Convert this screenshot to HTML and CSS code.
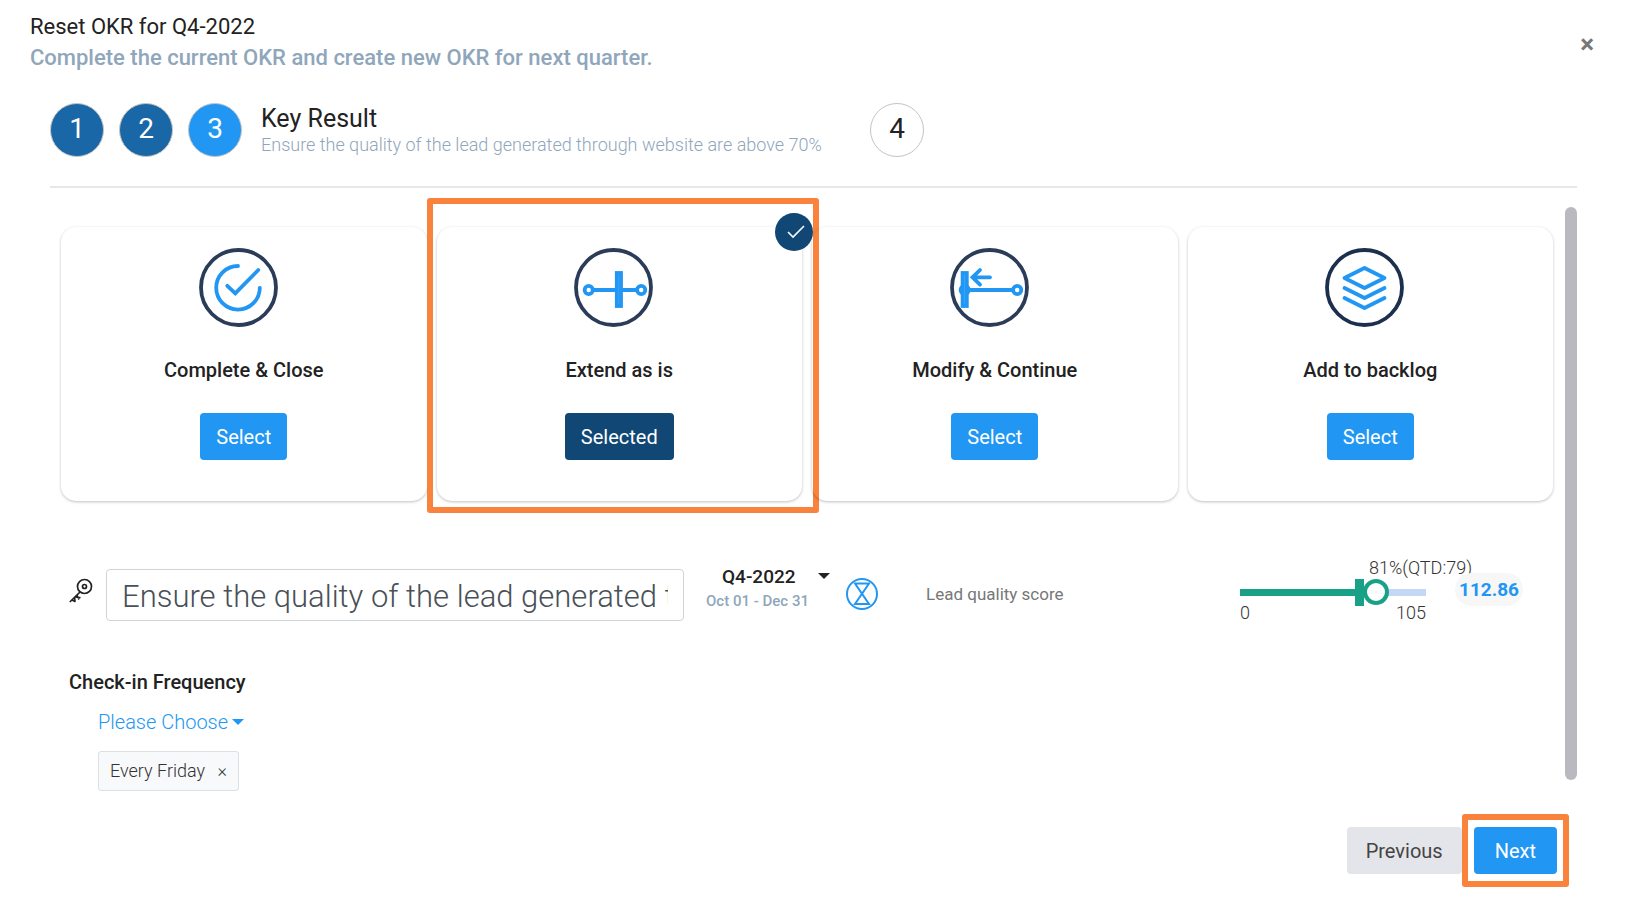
FILE: index.html
```html
<!DOCTYPE html>
<html lang="en">
  <head>
    <meta charset="UTF-8" />
    <meta name="viewport" content="width=device-width, initial-scale=1.0" />
    <title>Reset OKR</title>
    <link rel="stylesheet" href="styles.css">
  </head>
  <body>
    <div class="modal">
      <header class="modal-header">
        <div>
          <h1>Reset OKR for Q4-2022</h1>
          <p class="subtitle">Complete the current OKR and create new OKR for next quarter.</p>
        </div>
        <button class="close" type="button" aria-label="Close">&times;</button>
      </header>

      <div class="steps">
        <span class="step done">1</span>
        <span class="step done">2</span>
        <span class="step active">3</span>
        <div class="step-info">
          <h2>Key Result</h2>
          <p>Ensure the quality of the lead generated through website are above 70%</p>
        </div>
        <span class="step">4</span>
      </div>

      <div class="modal-body">
        <div class="content">
          <div class="cards">
            <section class="card">
              <svg class="card-icon" viewBox="0 0 90 79" fill="none" stroke="#2196f3" stroke-width="3.8" stroke-linecap="round">
                <circle cx="39.5" cy="39.5" r="37.5" stroke="#2b3c59" />
                <path d="M39 18a21.8 21.8 0 1 0 21.8 21.8M28.3 37.8l8 7.6 23-23.4" />
              </svg>
              <h3>Complete &amp; Close</h3>
              <button class="btn btn-primary" type="button">Select</button>
            </section>

            <section class="card selected">
              <span class="badge">
                <svg viewBox="0 0 18 14" fill="none" stroke="#fff" stroke-width="1.6"><path d="M1 7l5 5L17 1" /></svg>
              </span>
              <svg class="card-icon" viewBox="0 0 90 79" fill="none" stroke="#2196f3" stroke-width="3.8">
                <circle cx="39.5" cy="39.5" r="37.5" stroke="#2b3c59" />
                <circle cx="14.7" cy="42" r="4.1" />
                <circle cx="67.2" cy="42" r="4.1" />
                <path d="M19 42h44" />
                <rect x="42.8" y="25" width="4.2" height="33" fill="#64b5f6" />
              </svg>
              <h3>Extend as is</h3>
              <button class="btn btn-dark" type="button">Selected</button>
            </section>

            <section class="card">
              <svg class="card-icon" viewBox="0 0 90 79" fill="none" stroke="#2196f3" stroke-width="3.8">
                <circle cx="39.5" cy="39.5" r="37.5" stroke="#2b3c59" />
                <circle cx="14.7" cy="42" r="4.1" />
                <circle cx="67.2" cy="42" r="4.1" />
                <path d="M19 42h44" />
                <rect x="12.6" y="25" width="4.2" height="33" fill="#64b5f6" />
                <path d="M40 29.3H23M30 22l-7.5 7.3 7.5 7.3" stroke-linecap="round" />
              </svg>
              <h3>Modify &amp; Continue</h3>
              <button class="btn btn-primary" type="button">Select</button>
            </section>

            <section class="card">
              <svg class="card-icon" viewBox="0 0 90 79" fill="none" stroke="#2196f3" stroke-width="3.8" stroke-linecap="round" stroke-linejoin="round">
                <circle cx="39.5" cy="39.5" r="37.5" stroke="#1c2f4d" />
                <path d="M19.5 30l20-10 20 10-20 10zM19.5 40l20 10 20-10M19.5 50l20 10 20-10" />
              </svg>
              <h3>Add to backlog</h3>
              <button class="btn btn-primary" type="button">Select</button>
            </section>
          </div>

          <div class="key-result">
            <svg class="key-icon" viewBox="0 0 24 26" fill="none" stroke="#222" stroke-width="1.7">
              <circle cx="15.5" cy="8.5" r="7" />
              <circle cx="15.5" cy="8.5" r="2" />
              <path d="M11 14L.8 24M5.5 19.8l.6 4M3 22l3.5 1.8M8 17.5l2 4M6.5 19l5 .6" />
            </svg>
            <input class="kr-title" type="text" aria-label="Key result" value="Ensure the quality of the lead generated through website are above 70%" />
            <div class="period">
              <button class="period-toggle" type="button">Q4-2022<span class="caret"></span></button>
              <span class="period-dates">Oct 01 - Dec 31</span>
            </div>
            <svg class="hourglass" viewBox="0 0 32 32" fill="none" stroke="#2196f3" stroke-width="2">
              <circle cx="16" cy="16" r="15" />
              <path d="M9 5.5h14L9 26h14z" />
            </svg>
            <span class="metric">Lead quality score</span>
            <div class="progress">
              <label class="progress-label" for="score">81%(QTD:79)</label>
              <div class="slider">
                <input type="range" id="score" min="0" max="105" value="81" />
                <span class="qtd-marker"></span>
              </div>
              <div class="limits"><span>0</span><span>105</span></div>
            </div>
            <span class="score">112.86</span>
          </div>

          <div class="frequency">
            <h3>Check-in Frequency</h3>
            <button class="choose" type="button">Please Choose<span class="caret"></span></button>
            <div class="tag">Every Friday <button type="button" aria-label="Remove Every Friday">&times;</button></div>
          </div>
        </div>
        <div class="scrollbar"></div>
      </div>

      <footer class="modal-footer">
        <button class="btn btn-light" type="button">Previous</button>
        <div class="highlight">
          <button class="btn btn-primary btn-next" type="button">Next</button>
        </div>
      </footer>
    </div>
  </body>
</html>
```

FILE: styles.css
```css
* {
  box-sizing: border-box;
}
body {
  margin: 0;
  background-color: #fff;
  color: #222;
  font-family: Roboto, sans-serif;
  font-size: 18px;
  line-height: 24px;
}
h1, h2, h3, p {
  margin: 0;
}
button, input {
  font-family: inherit;
}
button {
  border: none;
  padding: 0;
  background: none;
  cursor: pointer;
}

/* header */
.modal-header {
  display: flex;
  justify-content: space-between;
  padding: 11px 35px 0 30px;
}
h1 {
  font-size: 22px;
  font-weight: 400;
  line-height: 31px;
}
.subtitle {
  color: #8fa6bb;
  font-size: 22px;
  font-weight: 500;
  line-height: 31px;
}
.close {
  align-self: center;
  padding-top: 4px;
  color: #777;
  font-size: 26px;
  font-weight: 700;
}

/* steps */
.steps {
  display: flex;
  align-items: center;
  height: 84px;
  margin: 31px 52px 0 50px;
  padding-bottom: 30px;
  border-bottom: 2px solid #e6e7e8;
}
.step {
  width: 54px;
  height: 54px;
  margin-right: 15px;
  border: 1px solid #c4c4c4;
  border-radius: 50%;
  font-size: 28px;
  line-height: 50px;
  text-align: center;
}
.done {
  background-color: #1967a6;
  color: #fff;
}
.active {
  background-color: #2196f3;
  color: #fff;
}
.step-info {
  min-width: 574px;
  margin: 2px 35px 0 4px;
}
.step-info h2 {
  font-size: 25px;
  font-weight: 400;
  line-height: 28px;
}
.step-info p {
  color: #8fa6bb;
  font-weight: 300;
}

/* body */
.modal-body {
  display: flex;
  gap: 12px;
  margin: 19px 52px 0 61px;
}
.content {
  flex: 1;
  min-width: 0;
  padding-top: 20px;
}
.scrollbar {
  width: 12px;
  margin-bottom: 11px;
  border-radius: 6px;
  background-color: #bab9bf;
}
.cards {
  display: grid;
  grid-template-columns: repeat(4, 1fr);
  gap: 10px;
}
.card {
  position: relative;
  display: flex;
  flex-direction: column;
  align-items: center;
  height: 274px;
  padding-top: 21px;
  border-radius: 15px;
  box-shadow: 0 1px 3px rgba(0, 0, 0, 0.25);
}
.card-icon {
  width: 90px;
  height: 79px;
}
.card h3 {
  margin: 30px 0;
  font-size: 20px;
  font-weight: 500;
  line-height: 26px;
}
.btn {
  height: 47px;
  padding: 0 16px;
  border-radius: 4px;
  color: #fff;
  font-size: 20px;
}
.btn-primary {
  background-color: #2196f3;
}
.btn-dark {
  background-color: #104775;
}
.btn-light {
  padding: 0 19px;
  background-color: #e4e5ea;
  color: #444;
}
.badge {
  position: absolute;
  top: -14px;
  right: -11px;
  display: flex;
  align-items: center;
  justify-content: center;
  width: 38px;
  height: 38px;
  border-radius: 50%;
  background-color: #104775;
}
.badge svg {
  width: 18px;
  margin-left: 4px;
}
.selected::after {
  content: "";
  position: absolute;
  inset: -29px -17px -12px -10px;
  border: 6px solid #f9823d;
  border-radius: 3px;
}

/* key result row */
.key-result {
  display: flex;
  align-items: center;
  margin-top: 48px;
  padding: 0 30px 0 8px;
}
.key-icon {
  width: 24px;
  height: 26px;
  margin: 4px 13px 0 0;
}
.kr-title {
  width: 578px;
  height: 52px;
  margin-top: 20px;
  margin-bottom: 8px;
  padding: 2px 15px 0;
  border: 1px solid #ced4da;
  border-radius: 4px;
  color: #495057;
  font-size: 31px;
  font-weight: 300;
}
.period {
  width: 140px;
  margin-left: 22px;
}
.period-toggle {
  margin-left: 16px;
  color: #222;
  font-size: 19px;
  font-weight: 500;
}
.caret {
  display: inline-block;
  margin-left: 4px;
  border: 6px solid transparent;
  border-top-color: currentColor;
  border-bottom: none;
  vertical-align: 4px;
}
.period-toggle .caret {
  margin-left: 22px;
}
.period-dates {
  display: block;
  color: #8fa6bb;
  font-size: 15px;
  font-weight: 500;
}
.hourglass {
  width: 32px;
  height: 32px;
  margin-top: 10px;
}
.metric {
  margin: 10px 0 0 48px;
  color: #777;
  font-size: 17px;
}
.progress {
  width: 186px;
  margin-left: auto;
  color: #333;
}
.progress-label {
  display: block;
  margin-left: 129px;
  font-weight: 300;
  line-height: 22px;
  white-space: nowrap;
}
.slider {
  position: relative;
  height: 26px;
}
.slider input {
  display: block;
  width: 100%;
  height: 26px;
  margin: 0;
  appearance: none;
  background: linear-gradient(90deg, #18a186 73%, #c3d8f4 73%) center / 100% 7px no-repeat;
}
.slider input::-webkit-slider-thumb {
  appearance: none;
  width: 26px;
  height: 26px;
  border: 4px solid #18a186;
  border-radius: 50%;
  background-color: #fff;
}
.qtd-marker {
  position: absolute;
  top: 0;
  left: 115px;
  width: 9px;
  height: 27px;
  background-color: #18a186;
}
.limits {
  display: flex;
  justify-content: space-between;
  font-weight: 300;
  line-height: 16px;
}
.score {
  width: 68px;
  margin-left: 29px;
  border-radius: 17px;
  background-color: #f7f7f8;
  color: #2196f3;
  font-size: 19px;
  font-weight: 700;
  line-height: 33px;
  text-align: center;
}

/* check-in frequency */
.frequency {
  margin-top: 40px;
  padding-left: 8px;
}
.frequency h3 {
  font-size: 20px;
  font-weight: 500;
  line-height: 26px;
}
.choose {
  display: block;
  margin: 14px 0 16px 29px;
  color: #2196f3;
  font-size: 20px;
  font-weight: 300;
  line-height: 26px;
}
.tag {
  width: fit-content;
  height: 40px;
  margin-left: 29px;
  padding: 0 11px;
  border: 1px solid #dcdfe6;
  border-radius: 3px;
  background-color: #f8f9fb;
  color: #333;
  font-weight: 300;
  line-height: 38px;
}
.tag button {
  margin-left: 8px;
  color: #333;
  font-size: 18px;
  font-weight: 300;
}

/* footer */
.modal-footer {
  display: flex;
  justify-content: flex-end;
  align-items: center;
  padding: 23px 60px 26px;
}
.highlight {
  padding: 7px 6px;
  border: 6px solid #f9823d;
  border-radius: 3px;
}
.btn-next {
  display: block;
  padding: 0 21px;
}
```
